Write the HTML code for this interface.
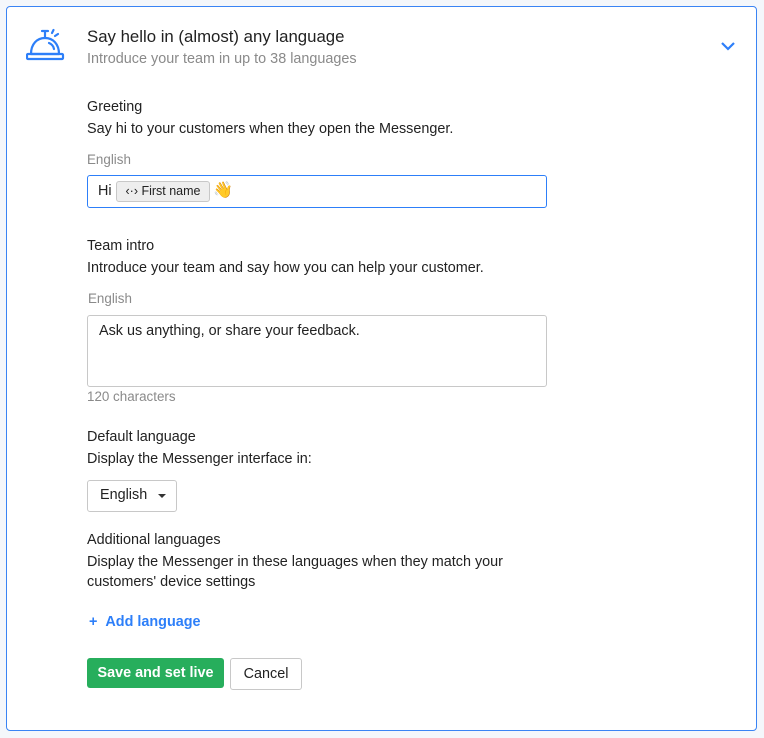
<!DOCTYPE html>
<html><head><style>
body{margin:0;background:#f4f7fb;font-family:"Liberation Sans",Arial,sans-serif;color:#222;width:764px;height:738px;overflow:hidden;position:relative}
.card{position:absolute;left:6px;top:6px;width:749px;height:723px;border:1px solid #3a84f4;border-radius:4px;background:#fff}
.a{position:absolute;white-space:nowrap;font-size:14.4px}
.g{color:#8a8a8a;font-size:13.4px}
.box{position:absolute;border:1px solid #c8c8c8;border-radius:3px;background:#fff}
</style></head><body>
<div class="card"></div>
<svg style="position:absolute;left:26px;top:27px" width="42" height="36" viewBox="0 0 42 36" fill="none" stroke="#2d7ff9" stroke-width="2.2" stroke-linecap="round" stroke-linejoin="round">
<path d="M5 27 C5 17 11 11 19 11 C27 11 33 17 33 27 Z"/><path d="M19 11 V5 M16 4 H22"/><rect x="1" y="27" width="36" height="5" rx="1"/><path d="M23 16 A8 8 0 0 1 28 22"/><path d="M26 6 l1.5 -3 M29 9 l3 -2"/>
</svg>
<div class="a" style="left:87px;top:27px;font-size:16.8px">Say hello in (almost) any language</div>
<div class="a g" style="left:87px;top:51px;font-size:14.4px">Introduce your team in up to 38 languages</div>
<svg style="position:absolute;left:720px;top:41px" width="16" height="10" viewBox="0 0 16 10"><path d="M2 2 L8 8 L14 2" stroke="#2d7ff9" stroke-width="2.2" fill="none"/></svg>
<div class="a" style="left:87px;top:99px">Greeting</div>
<div class="a" style="left:87px;top:121px">Say hi to your customers when they open the Messenger.</div>
<div class="a g" style="left:87px;top:152px">English</div>
<div class="box" style="left:87px;top:175px;width:458px;height:31px;border-color:#2d7ff9"></div>
<div class="a" style="left:98px;top:183px">Hi</div>
<div class="a" style="left:116px;top:181px;width:92px;height:19px;border:1px solid #c8c8c8;border-radius:3px;background:#eee;font-size:12.5px;line-height:19px;text-align:center">‹·› First name</div>
<div class="a" style="left:213px;top:180px;font-size:16px">👋</div>
<div class="a" style="left:87px;top:238px">Team intro</div>
<div class="a" style="left:87px;top:260px">Introduce your team and say how you can help your customer.</div>
<div class="a g" style="left:88px;top:291px">English</div>
<div class="box" style="left:87px;top:315px;width:458px;height:70px"></div>
<div class="a" style="left:99px;top:323px">Ask us anything, or share your feedback.</div>
<div class="a g" style="left:87px;top:389px">120 characters</div>
<div class="a" style="left:87px;top:429px">Default language</div>
<div class="a" style="left:87px;top:451px">Display the Messenger interface in:</div>
<div class="box" style="left:87px;top:480px;width:88px;height:30px"></div>
<div class="a" style="left:100px;top:487px">English</div>
<div style="position:absolute;left:158px;top:494px;border:4px solid transparent;border-top:4px solid #333;border-bottom:0"></div>
<div class="a" style="left:87px;top:532px">Additional languages</div>
<div class="a" style="left:87px;top:554px">Display the Messenger in these languages when they match your</div>
<div class="a" style="left:87px;top:574px">customers' device settings</div>
<div class="a" style="left:89px;top:614px;color:#2d7ff9;font-weight:bold">+ &nbsp;Add language</div>
<div class="a" style="left:87px;top:658px;width:137px;height:30px;background:#27ae5c;border-radius:3px;color:#fff;font-weight:bold;text-align:center;line-height:30px">Save and set live</div>
<div class="box" style="left:230px;top:658px;width:70px;height:30px;text-align:center;line-height:30px;font-size:14.4px">Cancel</div>
</body></html>
